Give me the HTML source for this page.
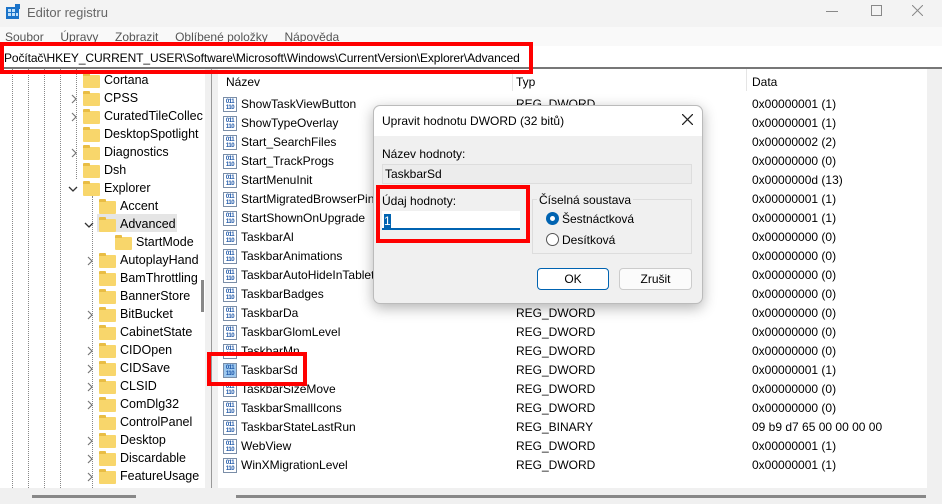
<!DOCTYPE html>
<html><head><meta charset="utf-8"><style>
*{margin:0;padding:0;box-sizing:border-box}
body{width:942px;height:504px;overflow:hidden;background:#fff;font-family:"Liberation Sans",sans-serif;font-size:12px;color:#000;position:relative}
.a{position:absolute;white-space:nowrap}
.fold{position:absolute;width:17px;height:13px;background:#f8d66b;border-radius:1px}
.fold:before{content:"";position:absolute;left:0;top:-2px;width:7px;height:3px;background:#e9bd44;border-radius:1px 1px 0 0}
.ico{position:absolute;width:14px;height:15px;border:1px solid #7a8ea8;background:#fff;font-size:6px;line-height:6px;color:#1d57a8;font-weight:bold;text-align:center;letter-spacing:-0.5px;padding-top:1px}
.chev{position:absolute}
.red{position:absolute;border:4px solid #f00}
</style></head><body>
<div class="a" style="left:0;top:0;width:942px;height:27px;background:#f3f3f3"></div>
<svg class="a" style="left:5px;top:4px" width="16" height="16"><rect x="1" y="3" width="13" height="12" fill="#1a73c9"/><g fill="#bfe0fa"><rect x="3" y="5" width="3" height="3"/><rect x="7" y="5" width="3" height="3"/><rect x="3" y="9" width="3" height="3"/><rect x="7" y="9" width="3" height="3"/><rect x="11" y="9" width="2" height="3"/></g><rect x="10" y="0" width="5" height="5" fill="#1a73c9"/></svg>
<div class="a" style="left:27px;top:5px;color:#666;font-size:13px">Editor registru</div>
<div class="a" style="left:826px;top:11px;width:12px;height:1px;background:#888"></div>
<div class="a" style="left:871px;top:5px;width:11px;height:11px;border:1px solid #888"></div>
<svg class="a" style="left:912px;top:5px" width="11" height="11"><path d="M0 0L11 11M11 0L0 11" stroke="#888" stroke-width="1"/></svg>
<div class="a" style="left:0;top:27px;width:942px;height:19px;background:#f9f9f9"></div>
<div class="a" style="left:5px;top:30px;color:#555">Soubor&nbsp;&nbsp;&nbsp;&nbsp; Úpravy&nbsp;&nbsp;&nbsp;&nbsp; Zobrazit&nbsp;&nbsp;&nbsp;&nbsp; Oblíbené položky&nbsp;&nbsp;&nbsp;&nbsp; Nápověda</div>
<div class="a" style="left:0;top:47px;width:942px;height:20px;background:#fff"></div>
<div class="a" style="left:4px;top:51px;letter-spacing:-0.1px">Počítač\HKEY_CURRENT_USER\Software\Microsoft\Windows\CurrentVersion\Explorer\Advanced</div>
<div class="a" style="left:0;top:67px;width:942px;height:2px;background:#777"></div>
<div class="a" style="left:205px;top:69px;width:13px;height:420px;background:#f0f0f0"></div>
<div class="a" style="left:211px;top:69px;width:1px;height:420px;background:#999"></div>
<div class="a" style="left:927px;top:69px;width:15px;height:420px;background:#f0f0f0"></div>
<div class="a" style="left:0;top:488px;width:942px;height:16px;background:#f0f0f0"></div>
<div class="a" style="left:32px;top:495px;width:104px;height:3px;background:#888"></div>
<div class="a" style="left:236px;top:495px;width:690px;height:3px;background:#888"></div>
<div class="a" style="left:201px;top:280px;width:3px;height:32px;background:#888"></div>
<div class="a" style="left:12px;top:69px;height:419px;border-left:1px dotted #888"></div>
<div class="a" style="left:28px;top:69px;height:419px;border-left:1px dotted #888"></div>
<div class="a" style="left:44px;top:69px;height:419px;border-left:1px dotted #888"></div>
<div class="a" style="left:60px;top:69px;height:419px;border-left:1px dotted #888"></div>
<div class="a" style="left:76px;top:69px;height:110px;border-left:1px dotted #888"></div>
<div class="a" style="left:92px;top:196px;height:292px;border-left:1px dotted #888"></div>
<div class="a" style="left:97px;top:214px;width:80px;height:18px;background:#e5e5e5"></div>
<div id="tree"></div>
<div class="a" style="left:226px;top:75px">Název</div>
<div class="a" style="left:512px;top:69px;width:1px;height:22px;background:#e5e5e5"></div>
<div class="a" style="left:516px;top:75px">Typ</div>
<div class="a" style="left:746px;top:69px;width:1px;height:22px;background:#e5e5e5"></div>
<div class="a" style="left:752px;top:75px">Data</div>
<div id="list"></div>
<div class="a" style="left:373px;top:105px;width:330px;height:199px;background:#f0f0f0;border:1px solid #bbb;border-radius:7px;box-shadow:0 4px 14px rgba(0,0,0,.3)"></div>
<div class="a" style="left:374px;top:106px;width:328px;height:30px;background:#fff;border-radius:7px 7px 0 0"></div>
<div class="a" style="left:382px;top:114px">Upravit hodnotu DWORD (32 bitů)</div>
<svg class="a" style="left:682px;top:114px" width="11" height="11"><path d="M0 0L11 11M11 0L0 11" stroke="#222" stroke-width="1.3"/></svg>
<div class="a" style="left:382px;top:147px">Název hodnoty:</div>
<div class="a" style="left:382px;top:164px;width:310px;height:20px;background:#ececec;border:1px solid #ddd"></div>
<div class="a" style="left:385px;top:167px">TaskbarSd</div>
<div class="a" style="left:382px;top:194px">Údaj hodnoty:</div>
<div class="a" style="left:382px;top:211px;width:138px;height:19px;background:#fff;border-bottom:2px solid #0063b1"></div>
<div class="a" style="left:384px;top:214px;width:7px;height:14px;background:#0063b1;color:#fff;line-height:14px">1</div>
<div class="a" style="left:532px;top:199px;width:160px;height:55px;border:1px solid #ddd"></div>
<div class="a" style="left:537px;top:193px;background:#f0f0f0;padding:0 2px">Číselná soustava</div>
<div class="a" style="left:546px;top:212px;width:13px;height:13px;border-radius:50%;background:#0063b1"></div>
<div class="a" style="left:550px;top:216px;width:5px;height:5px;border-radius:50%;background:#fff"></div>
<div class="a" style="left:562px;top:212px">Šestnáctková</div>
<div class="a" style="left:546px;top:233px;width:13px;height:13px;border-radius:50%;border:1px solid #555;background:#fff"></div>
<div class="a" style="left:562px;top:233px">Desítková</div>
<div class="a" style="left:537px;top:268px;width:72px;height:22px;background:#fff;border:1px solid #0063b1;border-radius:4px;text-align:center;line-height:20px">OK</div>
<div class="a" style="left:619px;top:268px;width:73px;height:22px;background:#fbfbfb;border:1px solid #ccc;border-radius:4px;text-align:center;line-height:20px">Zrušit</div>
<div class="red" style="left:0;top:42px;width:533px;height:32px"></div>
<div class="red" style="left:376px;top:185px;width:154px;height:58px"></div>
<div class="red" style="left:207px;top:352px;width:100px;height:34px"></div>
<script>
var t=[["Cortana",0,""],["CPSS",0,">"],["CuratedTileCollec",0,">"],["DesktopSpotlight",0,""],["Diagnostics",0,">"],["Dsh",0,""],["Explorer",0,"v"],["Accent",1,""],["Advanced",1,"v"],["StartMode",2,""],["AutoplayHand",1,">"],["BamThrottling",1,""],["BannerStore",1,""],["BitBucket",1,">"],["CabinetState",1,""],["CIDOpen",1,">"],["CIDSave",1,">"],["CLSID",1,">"],["ComDlg32",1,">"],["ControlPanel",1,""],["Desktop",1,">"],["Discardable",1,">"],["FeatureUsage",1,">"]];
var h="";t.forEach(function(r,i){var y=72+i*18,x=83+r[1]*16;
if(r[2]==">")h+='<svg class="chev" style="left:'+(x-13)+'px;top:'+(y+4)+'px" width="8" height="10"><path d="M2 1L6 5L2 9" fill="none" stroke="#777" stroke-width="1.2"/></svg>';
if(r[2]=="v")h+='<svg class="chev" style="left:'+(x-15)+'px;top:'+(y+5)+'px" width="10" height="8"><path d="M1 2L5 6L9 2" fill="none" stroke="#333" stroke-width="1.3"/></svg>';
h+='<div class="fold" style="left:'+x+'px;top:'+(y+3)+'px"></div><div class="a" style="left:'+(x+21)+'px;top:'+(y+1)+'px;font-size:12.5px">'+r[0]+'</div>';});
document.getElementById("tree").outerHTML=h;
var l=[["ShowTaskViewButton","REG_DWORD","0x00000001 (1)"],["ShowTypeOverlay","REG_DWORD","0x00000001 (1)"],["Start_SearchFiles","REG_DWORD","0x00000002 (2)"],["Start_TrackProgs","REG_DWORD","0x00000000 (0)"],["StartMenuInit","REG_DWORD","0x0000000d (13)"],["StartMigratedBrowserPin","REG_DWORD","0x00000001 (1)"],["StartShownOnUpgrade","REG_DWORD","0x00000001 (1)"],["TaskbarAl","REG_DWORD","0x00000000 (0)"],["TaskbarAnimations","REG_DWORD","0x00000000 (0)"],["TaskbarAutoHideInTablet","REG_DWORD","0x00000000 (0)"],["TaskbarBadges","REG_DWORD","0x00000000 (0)"],["TaskbarDa","REG_DWORD","0x00000000 (0)"],["TaskbarGlomLevel","REG_DWORD","0x00000000 (0)"],["TaskbarMn","REG_DWORD","0x00000000 (0)"],["TaskbarSd","REG_DWORD","0x00000001 (1)"],["TaskbarSizeMove","REG_DWORD","0x00000000 (0)"],["TaskbarSmallIcons","REG_DWORD","0x00000000 (0)"],["TaskbarStateLastRun","REG_BINARY","09 b9 d7 65 00 00 00 00"],["WebView","REG_DWORD","0x00000001 (1)"],["WinXMigrationLevel","REG_DWORD","0x00000001 (1)"]];
h="";l.forEach(function(r,i){var y=96+i*19;
h+='<div class="ico" style="left:223px;top:'+(y+1)+'px;'+(r[0]=="TaskbarSd"?"background:#9cc7ee":"")+'">011<br>110</div>';
h+='<div class="a" style="left:241px;top:'+(y+1)+'px">'+r[0]+'</div><div class="a" style="left:516px;top:'+(y+1)+'px">'+r[1]+'</div><div class="a" style="left:752px;top:'+(y+1)+'px">'+r[2]+'</div>';});
document.getElementById("list").outerHTML=h;
</script>
</body></html>
